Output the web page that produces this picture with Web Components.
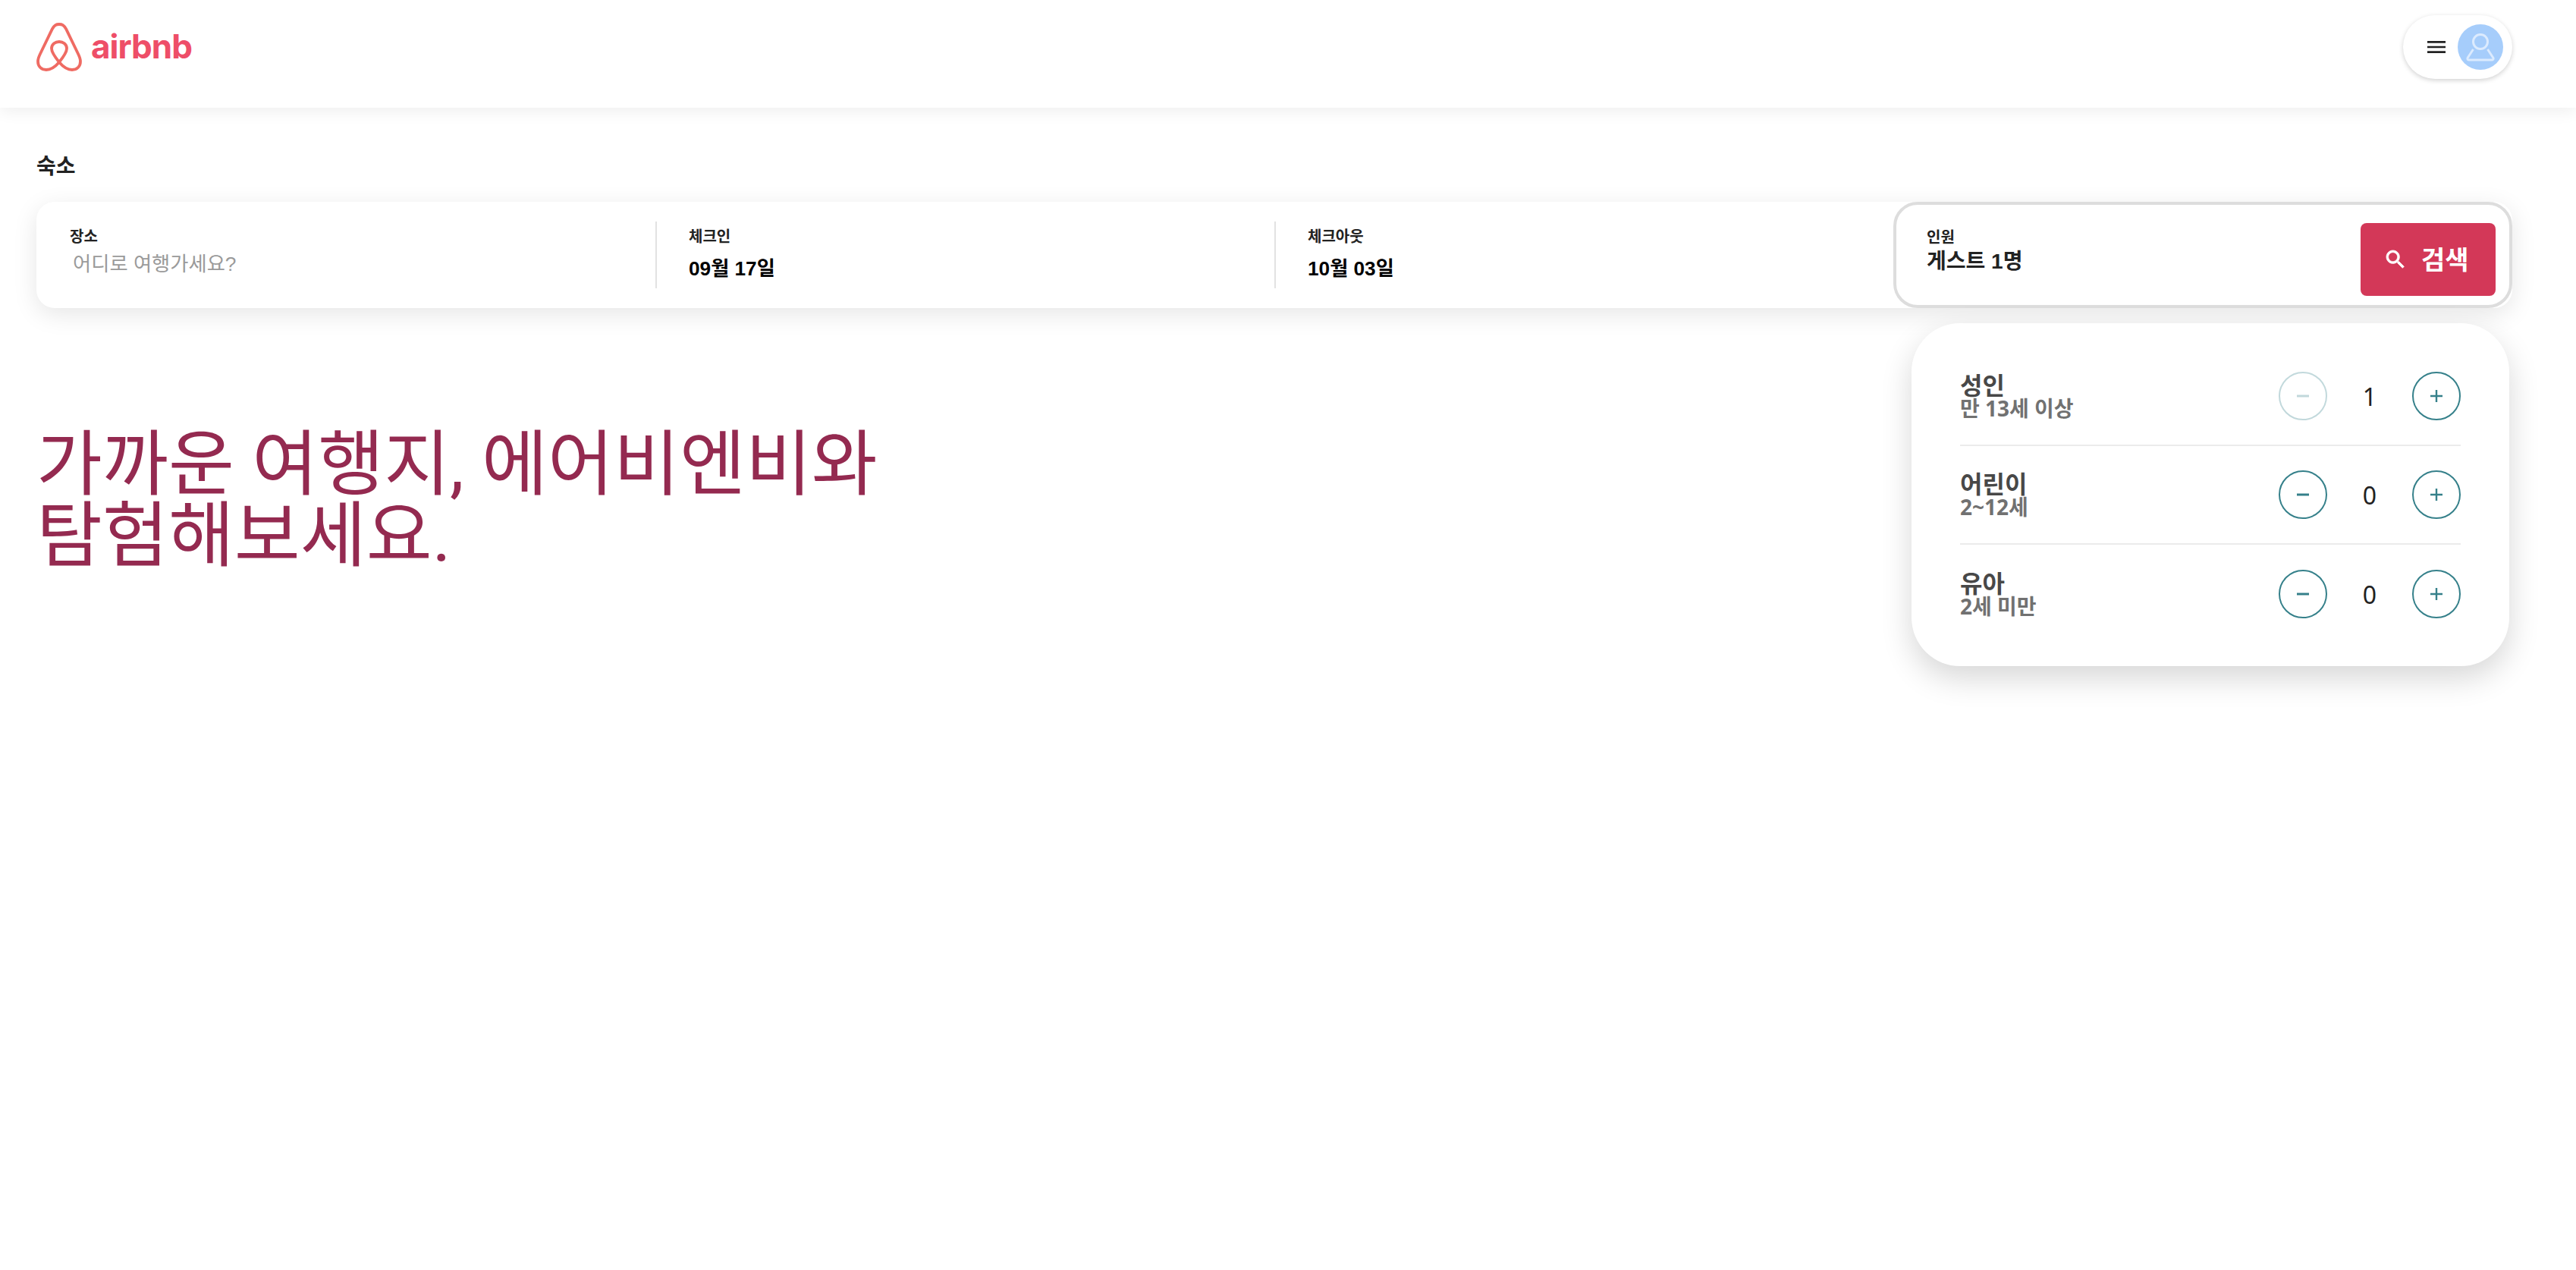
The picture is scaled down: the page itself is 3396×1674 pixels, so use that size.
<!DOCTYPE html>
<html lang="ko">
<head>
<meta charset="utf-8">
<title>airbnb</title>
<style>
  html, body { margin: 0; background: #fff; }
  body { font-family: "Liberation Sans", "Noto Sans CJK KR", sans-serif; color: #222; height: 1674px; overflow: hidden; }
</style>
</head>
<body>
<air-header></air-header>
<air-main>
  <span slot="title">숙소</span>
  <search-bar slot="bar">
    <search-field label="장소" placeholder>어디로 여행가세요?</search-field>
    <search-field label="체크인">09월 17일</search-field>
    <search-field label="체크아웃">10월 03일</search-field>
    <guest-field label="인원" value="게스트 1명"></guest-field>
  </search-bar>
  <guest-popup slot="bar">
    <guest-row label="성인" note="만 13세 이상" count="1" min></guest-row>
    <guest-row label="어린이" note="2~12세" count="0"></guest-row>
    <guest-row label="유아" note="2세 미만" count="0"></guest-row>
  </guest-popup>
  <span slot="hero">가까운 여행지, 에어비엔비와<br>탐험해보세요.</span>
</air-main>

<script>
class AirHeader extends HTMLElement {
  connectedCallback() {
    this.attachShadow({ mode: 'open' });
    this.shadowRoot.innerHTML = `
      <style>
        :host { display: flex; align-items: center; justify-content: space-between; box-sizing: border-box; height: 142px; padding: 0 84px 18px 48px; background: #fff; box-shadow: 0 4px 20px rgba(0,0,0,.07); position: relative; }
        .logo { display: flex; align-items: center; gap: 12px; height: 64px; }
        .mark { color: #ee4e68; font: 700 44px/1 "Inter", "Liberation Sans", sans-serif; letter-spacing: -1px; position: relative; top: -1px; }
        svg { display: block; }
        .menu { display: flex; align-items: center; box-sizing: border-box; width: 144px; height: 84px; padding: 0 12px 0 28px; border-radius: 42px; background: #fff; box-shadow: 0 2px 6px rgba(0,0,0,.18); }
        .menu .bars { margin-right: 12px; }
      </style>
      <div class="logo">
        <svg width="60" height="64" viewBox="48 30 60 64" fill="none">
          <path d="M78 82C70 72 68 68 68 64C68 58 73 55 78 55C83 55 88 58 88 64C88 68 86 72 78 82C72 89 67 92 61 92C54 92 50 87 50 81C50 77 51 75 53 71L69 38C72 33 74 32 78 32C82 32 84 33 87 38L103 71C105 75 106 77 106 81C106 87 102 92 95 92C89 92 84 89 78 82Z" stroke="#ef6b63" stroke-width="3.8"/>
        </svg>
        <span class="mark">airbnb</span>
      </div>
      <div class="menu">
        <svg class="bars" width="32" height="32" viewBox="0 0 24 24" fill="#222"><path d="M3 18h18v-2H3v2zm0-5h18v-2H3v2zm0-7v2h18V6H3z"/></svg>
        <svg width="60" height="60" viewBox="0 0 60 60" fill="none">
          <circle cx="30" cy="30" r="30" fill="#a6cdfb"/>
          <circle cx="30" cy="23" r="9.5" stroke="#dcebfe" stroke-width="3"/>
          <path d="M20.5 33L13 44.5Q12.5 47 15 47H45Q47.5 47 47 44.5L39.5 33" stroke="#dcebfe" stroke-width="3"/>
        </svg>
      </div>
    `;
  }
}

class AirMain extends HTMLElement {
  connectedCallback() {
    this.attachShadow({ mode: 'open' });
    this.shadowRoot.innerHTML = `
      <style>
        :host { display: block; padding: 62px 84px 0 48px; }
        .title { font-size: 28px; font-weight: 700; line-height: 32px; margin-bottom: 30px; }
        .bar-wrap { position: relative; }
        .hero { margin-top: 160px; font-family: "Roboto", "Noto Sans CJK KR", sans-serif; font-size: 94.5px; line-height: 94px; color: #942a50; }
      </style>
      <div class="title"><slot name="title"></slot></div>
      <div class="bar-wrap"><slot name="bar"></slot></div>
      <div class="hero"><slot name="hero"></slot></div>
    `;
  }
}

class SearchBar extends HTMLElement {
  connectedCallback() {
    this.attachShadow({ mode: 'open' });
    this.shadowRoot.innerHTML = `
      <style>
        :host { display: grid; grid-template-columns: repeat(4, 1fr); height: 140px; background: #fff; border-radius: 24px; box-shadow: 0 8px 32px rgba(0,0,0,.1); }
      </style>
      <slot></slot>
    `;
  }
}

class SearchField extends HTMLElement {
  connectedCallback() {
    const label = this.getAttribute('label');
    this.attachShadow({ mode: 'open' });
    this.shadowRoot.innerHTML = `
      <style>
        :host { display: flex; align-items: center; box-sizing: border-box; }
        :host(:not(:first-child)) .cell { border-left: 2px solid #e2e2e2; padding-left: 42px; }
        .cell { box-sizing: border-box; width: 100%; height: 88px; padding-left: 44px; }
        .label { font-size: 20px; font-weight: 700; line-height: 24px; margin-top: 8px; }
        .value { font-size: 26.2px; font-weight: 700; line-height: 32px; margin-top: 14px; color: #000; }
        :host([placeholder]) .value { font-weight: 400; color: #9a9a9a; font-size: 26.3px; margin: 8px 0 0 4px; }
      </style>
      <div class="cell">
        <div class="label">${label}</div>
        <div class="value"><slot></slot></div>
      </div>
    `;
  }
}

class GuestField extends HTMLElement {
  connectedCallback() {
    this.attachShadow({ mode: 'open' });
    this.shadowRoot.innerHTML = `
      <style>
        :host { display: flex; align-items: center; justify-content: space-between; box-sizing: border-box; height: 140px; padding: 0 18px 0 40px; background: #fff; border: 4px solid #ddd; border-radius: 32px; }
        .info { margin-top: -10px; }
        .label { font-size: 20px; font-weight: 700; line-height: 24px; }
        .value { font-size: 28px; font-weight: 700; line-height: 34px; margin-top: 3px; }
        .btn { display: flex; align-items: center; box-sizing: border-box; width: 178px; height: 96px; margin-top: 12px; padding-left: 30px; gap: 18px; border-radius: 8px; background: #d33858; color: #fff; font-size: 34px; font-weight: 700; }
        .btn span { margin-bottom: 3px; }
        svg { display: block; }
      </style>
      <div class="info">
        <div class="label">${this.getAttribute('label')}</div>
        <div class="value">${this.getAttribute('value')}</div>
      </div>
      <div class="btn">
        <svg width="32" height="32" viewBox="0 0 24 24" fill="#fff" stroke="#fff" stroke-width=".6"><path d="M15.5 14h-.79l-.28-.27C15.41 12.59 16 11.11 16 9.5 16 5.91 13.09 3 9.5 3S3 5.91 3 9.5 5.91 16 9.5 16c1.61 0 3.09-.59 4.23-1.57l.27.28v.79l5 4.99L20.49 19l-4.99-5zm-6 0C7.01 14 5 11.99 5 9.5S7.01 5 9.5 5 14 7.01 14 9.5 11.99 14 9.5 14z"/></svg>
        <span>검색</span>
      </div>
    `;
  }
}

class GuestPopup extends HTMLElement {
  connectedCallback() {
    this.attachShadow({ mode: 'open' });
    this.shadowRoot.innerHTML = `
      <style>
        :host { position: absolute; top: 160px; right: 4px; box-sizing: border-box; width: 788px; height: 452px; padding: 0 64px; background: #fff; border-radius: 64px; box-shadow: 0 16px 40px rgba(0,0,0,.16); z-index: 2; }
        .rows { display: flex; flex-direction: column; padding-top: 32px; }
      </style>
      <div class="rows"><slot></slot></div>
    `;
  }
}

class GuestRow extends HTMLElement {
  connectedCallback() {
    const off = this.hasAttribute('min');
    this.attachShadow({ mode: 'open' });
    this.shadowRoot.innerHTML = `
      <style>
        :host { display: flex; align-items: center; justify-content: space-between; box-sizing: border-box; height: 130px; font-family: "Noto Sans", "Noto Sans CJK KR", sans-serif; border-bottom: 2px solid #ebebeb; }
        :host(:last-child) { border-bottom: 0; }
        .label { font-size: 32px; font-weight: 700; line-height: 30px; color: #484848; margin-top: 2px; }
        .note { font-size: 28px; font-weight: 700; line-height: 30px; color: #717171; }
        .ctl { display: flex; align-items: center; }
        .count { width: 112px; text-align: center; font-size: 32px; color: #222; }
        .round { display: flex; align-items: center; justify-content: center; box-sizing: border-box; width: 64px; height: 64px; border: 2px solid #35808a; border-radius: 50%; }
        .round.off { opacity: .3; }
        svg { display: block; }
      </style>
      <div>
        <div class="label">${this.getAttribute('label')}</div>
        <div class="note">${this.getAttribute('note')}</div>
      </div>
      <div class="ctl">
        <div class="round ${off ? 'off' : ''}"><svg width="16" height="16" viewBox="0 0 16 16"><path d="M0 6.5h16v3H0z" fill="#35808a"/></svg></div>
        <div class="count">${this.getAttribute('count')}</div>
        <div class="round"><svg width="16" height="16" viewBox="0 0 16 16"><path d="M0 8h16M8 0v16" stroke="#35808a" stroke-width="2.4"/></svg></div>
      </div>
    `;
  }
}

customElements.define('air-header', AirHeader);
customElements.define('air-main', AirMain);
customElements.define('search-bar', SearchBar);
customElements.define('search-field', SearchField);
customElements.define('guest-field', GuestField);
customElements.define('guest-popup', GuestPopup);
customElements.define('guest-row', GuestRow);
</script>
</body>
</html>
